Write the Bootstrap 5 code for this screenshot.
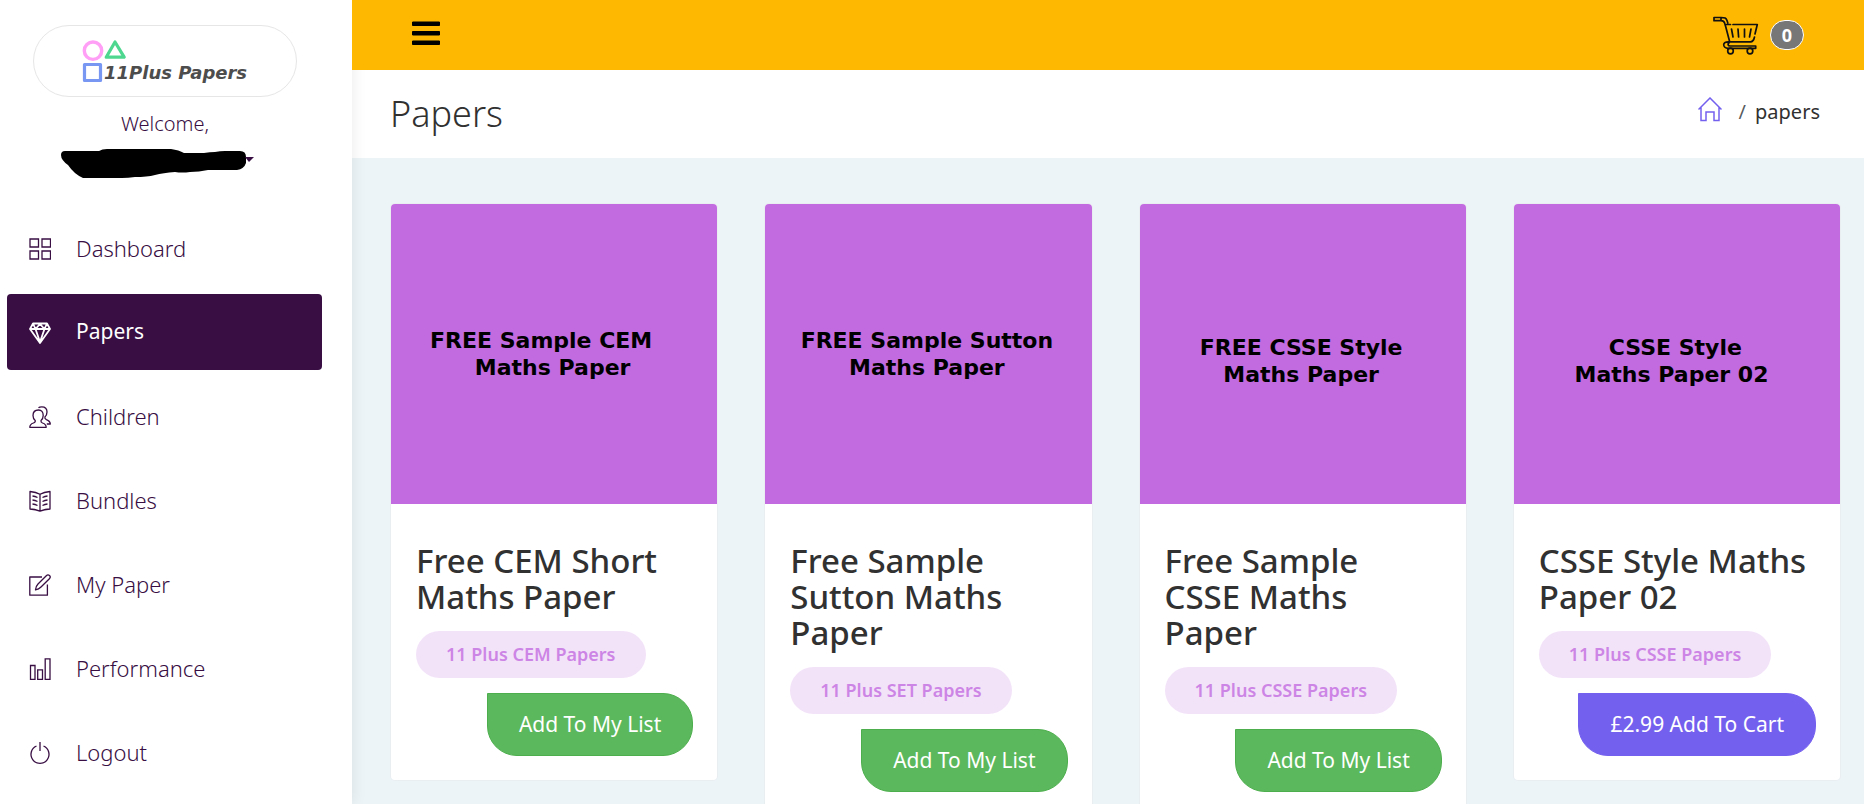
<!DOCTYPE html>
<html lang="en">
<head>
<meta charset="utf-8">
<meta name="viewport" content="width=device-width, initial-scale=1">
<title>Papers - 11Plus Papers</title>
<link rel="stylesheet" href="https://cdn.jsdelivr.net/npm/bootstrap@5.3.0/dist/css/bootstrap.min.css">
<style>
  :root { --ink: #380e43; --amber: #ffb802; --violet: #7460ee; --orchid: #c26be0; }
  body { font-family: "Noto Sans", "Open Sans", sans-serif; color: #313131; background: #ecf4f8; }
  a { text-decoration: none; }

  .sidebar { width: 352px; z-index: 1; box-shadow: 1px 0 14px rgba(0, 0, 0, .08); }
  .brand { width: 264px; height: 72px; margin: 25px 0 0 33px; border: 1px solid #e6e6e6; border-radius: 36px; }
  .profile { width: 264px; margin: 12px 0 0 33px; color: var(--ink); font-weight: 300; font-size: 20px; line-height: 30px; }
  .side-menu { margin: 29px 30px 0 7px; gap: 8px; }
  .side-link { height: 76px; padding: 0 22px; gap: 25px; border-radius: 4px; color: var(--ink); font-size: 22px; font-weight: 300; }
  .side-link.active { background: var(--ink); color: #fff; font-size: 21px; font-weight: 400; }
  .side-link svg { width: 22px; height: 22px; margin-top: 2px; fill: none; stroke: currentColor; stroke-width: 1.3; }
  .side-link.active svg { stroke-width: 1.8; }

  .page { scrollbar-width: none; }
  .topbar { height: 70px; padding: 0 60px; background: var(--amber); z-index: 2; }
  .count { min-width: 34px; height: 30px; border: 1px solid #fff; border-radius: 15px; background: #777; color: #fff; font-size: 18px; font-weight: 700; line-height: 28px; }
  .titlebar { height: 88px; padding: 0 44px 0 38px; }
  .titlebar h1 { font-size: 36px; line-height: 44px; font-weight: 300; }
  .breadcrumb { font-size: 20px; --bs-breadcrumb-item-padding-x: 9px; --bs-breadcrumb-item-active-color: #313131; }

  .catalog { padding: 46px 0 24px 15px; }
  .catalog .row { --bs-gutter-x: 48px; }
  .paper { border: 0; border-radius: 4px; overflow: hidden; box-shadow: 0 0 0 1px #e9eef1; }
  .cover { height: 300px; padding-right: 3px; background: var(--orchid); color: #000; font: 700 22px/27px "DejaVu Sans", sans-serif; }
  .cover-low { padding-top: 13px; }
  .paper-body { padding: 39px 24px 24px 25px; }
  .paper-body h2 { margin-bottom: 16px; padding-right: 4px; font-size: 33px; line-height: 36px; font-weight: 500; }
  .tag { padding: 0 30px; border-radius: 24px; background: #f3e3f9; color: #cd85e5; font-size: 18px; font-weight: 600; line-height: 47px; }
  .btn-paper { height: 63px; margin-top: 15px; padding: 0 31px; border-radius: 0 30px 30px 30px; color: #fff; font-size: 21px; }
  .btn-list { background: #5cb85c; border-color: #4cae4c; }
  .btn-cart { background: var(--violet); border-color: var(--violet); }
</style>
</head>
<body>
<div class="d-flex vh-100 overflow-hidden">

  <aside class="sidebar bg-white flex-shrink-0 position-relative">
    <a href="#" class="brand d-block bg-white" aria-label="11Plus Papers home">
      <svg width="262" height="70" viewBox="34 26 262 70">
        <circle cx="93" cy="50.7" r="8.7" fill="none" stroke="#ff9ff5" stroke-width="3.4"/>
        <path d="M115 42 124.200 57.200H106.200Z" fill="none" stroke="#4dd78f" stroke-width="3.200" stroke-linejoin="round"/>
        <path d="M84.500 64.500h16v16h-16z" fill="none" stroke="#7797f3" stroke-width="3.200" stroke-linejoin="round"/>
        <text x="104" y="79" font-family="DejaVu Sans, sans-serif" font-size="18" font-weight="700" font-style="italic" fill="#4d4d4d">11Plus Papers</text>
      </svg>
    </a>

    <div class="profile text-center">
      <div>Welcome,</div>
      <svg class="d-block" width="264" height="42" viewBox="33 139 264 42" role="img" aria-label="Account name">
        <path d="M61 155q0-4 4-4h34q3-2 8-2h64q8 1 13 4h20q6-1 11-1 5-1 10-1h15q6 0 6 6v6q-2 6-9 7h-29q-9 2-18 2-8 1-15 0-12 1-20 3-8 2-20 2-7 1-13 1H83q-9-4-15-13-7-5-7-10z" fill="#000"/>
        <path d="M245 157h9l-5 5z" fill="#380e43"/>
      </svg>
    </div>

    <nav class="side-menu nav flex-column flex-nowrap" aria-label="Main menu">
      <a class="side-link d-flex align-items-center" href="#">
        <svg viewBox="0 0 22 22"><path d="M1 1h8.500v8H1zM13 1h8.500v8H13zM1 13h8.500v8H1zM13 13h8.500v8H13z"/></svg>Dashboard</a>
      <a class="side-link active d-flex align-items-center" href="#" aria-current="page">
        <svg viewBox="0 0 22 22" stroke-linejoin="round"><path d="M4 1.500h14l3 5.500L11 21 1 7zM1 7h20M6.500 7 11 20l4.500-13M4 1.500 6.500 7 11 2l4.500 5L18 1.500"/></svg>Papers</a>
      <a class="side-link d-flex align-items-center" href="#">
        <svg viewBox="0 0 22 22" stroke-linejoin="round"><path d="M9.500 4C6 4 4 6 4 9.500c0 2 .8 3.800 2.200 5 .3 1.200-.2 2-1.700 2.500C2 17.800.8 18.500.8 21.300h16.400c0-2.800-1.200-3.500-3.700-4.300-1.300-.5-1.800-1.300-1.500-2.500 1.400-1.200 2.200-3 2.200-5C14.200 6 12.500 4 9.500 4z"/><path d="M9.500 1.800C10.300 1 11.500.8 12.800.8c3.200 0 5.200 1.900 5.200 5.200 0 2.200-.8 3.800-2.100 5-.3 1.200.2 2 1.500 2.600 2.500 1 3.900 1.700 3.900 4.400h-3.500"/></svg>Children</a>
      <a class="side-link d-flex align-items-center" href="#">
        <svg viewBox="0 0 22 22" stroke-linejoin="round"><path d="M1 1.500c4 .3 7 1 10 2.800 3-1.800 6-2.500 10-2.800v17.500c-4 .2-7 .8-10 2.200C8 19.800 5 19.200 1 19zM11 4.300v17M3.500 6c2 .2 3.500.7 5 1.500M3.500 10c2 .2 3.500.7 5 1.500M3.500 14c2 .2 3.500.7 5 1.500M18.500 6c-2 .2-3.500.7-5 1.500M18.500 10c-2 .2-3.500.7-5 1.500M18.500 14c-2 .2-3.500.7-5 1.500"/></svg>Bundles</a>
      <a class="side-link d-flex align-items-center" href="#">
        <svg viewBox="0 0 22 22" stroke-linejoin="round"><path d="M13 3H.8v18.200h17.600V10.500"/><path d="M6.500 15.800c.3-2.500 1-4.300 2.500-5.800l8.300-8.300c1-1 2.300-1 3.200-.2.900.9.900 2.200-.1 3.200L12 13c-1.500 1.500-3.200 2.400-5.500 2.800z"/></svg>My Paper</a>
      <a class="side-link d-flex align-items-center" href="#">
        <svg viewBox="0 0 22 22"><path d="M1.500 7.500h4.500v13.800H1.500zM8.700 11.800h4.800v9.500H8.700zM16.200.8H21v20.500h-4.800z"/></svg>Performance</a>
      <a class="side-link d-flex align-items-center" href="#">
        <svg viewBox="0 0 22 22"><path d="M11 0v9M7.500 4a9 9 0 1 0 7 0"/></svg>Logout</a>
    </nav>
  </aside>

  <div class="page flex-grow-1 overflow-auto">
    <header class="topbar d-flex align-items-center justify-content-between position-relative">
      <button type="button" class="btn p-0 pb-1 border-0 lh-1" aria-label="Toggle menu">
        <svg class="d-block" width="28" height="24" viewBox="0 0 28 24"><path d="M.5 1h27v3.500h-27zM.5 10.500h27v3.500h-27zM.5 20h27v3.500h-27z" stroke="#000" stroke-linejoin="round"/></svg>
      </button>
      <a href="#" class="d-flex align-items-center" aria-label="Cart, 0 items">
        <svg class="me-2" width="51" height="40" viewBox="1711 15 51 40" fill="none" stroke="#111" stroke-width="1.700" stroke-linejoin="round" stroke-linecap="round">
          <path d="M1714 17.500h7v3.200h-7zM1721 17.500c4 0 5 .5 6 3l.8 2.500M1721 20.700c2.300 0 3 .3 3.600 2.300l1.200 4 3.800 14.500M1726.500 24.500h4M1733 24.500h24.300l-2.300 9.500M1754.500 37c-.6 3-1.500 4.800-4 4.800h-22c-3 0-4.800 1.500-4.800 3s1.500 3.500 4.500 3.500h27.500v-2.300h-25.500c-2.500 0-2.800-2-1-3.500"/>
          <path d="M1731.500 29l1.500 8M1738 29l.6 8M1744.500 29v8M1751 29l-1.500 8"/>
          <circle cx="1730.500" cy="51" r="2.800"/><circle cx="1750" cy="51" r="2.800"/>
        </svg>
        <span class="count text-center">0</span>
      </a>
    </header>

    <div class="titlebar bg-white d-flex align-items-center justify-content-between">
      <h1 class="mb-0">Papers</h1>
      <nav class="pb-1" aria-label="breadcrumb">
        <ol class="breadcrumb mb-0 align-items-center">
          <li class="breadcrumb-item pe-2 pb-1"><a href="#" aria-label="Home"><svg class="d-block" width="24" height="26" viewBox="0 0 24 26" fill="none" stroke="#7460ee" stroke-width="1.500"><path d="M.5 12.500 12 1l11.500 11.500M3 10.500V23.500h5v-8.500h8v8.500h5V10.500"/></svg></a></li>
          <li class="breadcrumb-item active" aria-current="page">papers</li>
        </ol>
      </nav>
    </div>

    <main class="catalog">
      <div class="row align-items-start m-0">
        <div class="col-3">
          <article class="paper card">
            <div class="cover d-flex flex-column justify-content-center text-center"><div>FREE Sample CEM&nbsp;&nbsp;&nbsp;</div><div>Maths Paper</div></div>
            <div class="paper-body d-flex flex-column">
              <h2>Free CEM Short Maths Paper</h2>
              <span class="tag align-self-start">11 Plus CEM Papers</span>
              <button type="button" class="btn btn-paper btn-list align-self-end">Add To My List</button>
            </div>
          </article>
        </div>
        <div class="col-3">
          <article class="paper card">
            <div class="cover d-flex flex-column justify-content-center text-center"><div>FREE Sample Sutton</div><div>Maths Paper</div></div>
            <div class="paper-body d-flex flex-column">
              <h2>Free Sample Sutton Maths Paper</h2>
              <span class="tag align-self-start">11 Plus SET Papers</span>
              <button type="button" class="btn btn-paper btn-list align-self-end">Add To My List</button>
            </div>
          </article>
        </div>
        <div class="col-3">
          <article class="paper card">
            <div class="cover cover-low d-flex flex-column justify-content-center text-center"><div>FREE CSSE Style</div><div>Maths Paper</div></div>
            <div class="paper-body d-flex flex-column">
              <h2>Free Sample CSSE Maths Paper</h2>
              <span class="tag align-self-start">11 Plus CSSE Papers</span>
              <button type="button" class="btn btn-paper btn-list align-self-end">Add To My List</button>
            </div>
          </article>
        </div>
        <div class="col-3">
          <article class="paper card">
            <div class="cover cover-low d-flex flex-column justify-content-center text-center"><div>CSSE Style</div><div>Maths Paper 02&nbsp;</div></div>
            <div class="paper-body d-flex flex-column">
              <h2>CSSE Style Maths Paper 02</h2>
              <span class="tag align-self-start">11 Plus CSSE Papers</span>
              <button type="button" class="btn btn-paper btn-cart align-self-end">£2.99 Add To Cart</button>
            </div>
          </article>
        </div>
      </div>
    </main>
  </div>
</div>
<script src="https://cdn.jsdelivr.net/npm/bootstrap@5.3.0/dist/js/bootstrap.bundle.min.js"></script>
</body>
</html>
